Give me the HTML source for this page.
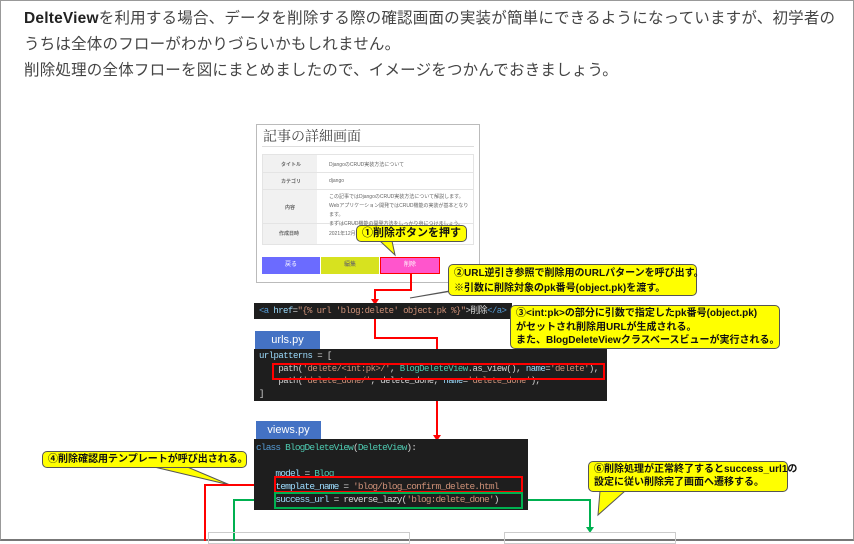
<!DOCTYPE html>
<html><head><meta charset="utf-8"><style>
*{margin:0;padding:0;box-sizing:border-box}
body{width:854px;height:541px;overflow:hidden;background:#fff;position:relative;font-family:"Liberation Sans","Noto Sans CJK JP",sans-serif}
.frame{position:absolute;left:0;top:0;width:854px;height:541px;border:1px solid #999;border-bottom:2px solid #777}
.p{position:absolute;left:24px;font-size:15.5px;color:#444;white-space:nowrap;letter-spacing:0.2px}
.a{position:absolute}
.call{position:absolute;background:#ffff00;border:1.5px solid #555;border-radius:5px;font-size:10px;font-weight:bold;color:#111;line-height:15px;padding:1px 5px;white-space:nowrap}
.code{position:absolute;background:#1e1e1e;font-family:"Liberation Mono","Noto Sans CJK JP",monospace;color:#d4d4d4;white-space:pre;overflow:hidden}
.tab{position:absolute;background:#4472c4;color:#fff;font-size:11px;text-align:center;line-height:18px}
.s{color:#ce9178}.c{color:#4ec9b0}.n{color:#9cdcfe}.k{color:#569cd6}
</style></head><body>
<div class="frame"></div>
<div class="p" style="top:6px"><b style="color:#222">DelteView</b>を利用する場合、データを削除する際の確認画面の実装が簡単にできるようになっていますが、初学者の</div>
<div class="p" style="top:32px">うちは全体のフローがわかりづらいかもしれません。</div>
<div class="p" style="top:58px">削除処理の全体フローを図にまとめましたので、イメージをつかんでおきましょう。</div>

<div class="a" style="left:256px;top:124px;width:224px;height:159px;border:1px solid #bbb;background:#fff"></div>
<div class="a" style="left:263px;top:126px;font-family:'Liberation Serif','Noto Serif CJK SC',serif;font-size:14px;color:#444">記事の詳細画面</div>
<div class="a" style="left:262px;top:146px;width:212px;height:1px;background:#ddd"></div>
<div class="a" style="left:262px;top:154px;width:212px;height:91px;border:1px solid #e4e4e4;font-size:5px;color:#666">
<div class="a" style="left:0;top:0;width:54px;height:89px;background:#f1f1f1"></div>
<div class="a" style="left:0;top:17px;width:210px;height:1px;background:#e4e4e4"></div>
<div class="a" style="left:0;top:34px;width:210px;height:1px;background:#e4e4e4"></div>
<div class="a" style="left:0;top:68px;width:210px;height:1px;background:#e4e4e4"></div>
<div class="a" style="left:18px;top:6px;font-weight:bold">タイトル</div><div class="a" style="left:66px;top:6px">DjangoのCRUD実装方法について</div>
<div class="a" style="left:18px;top:23px;font-weight:bold">カテゴリ</div><div class="a" style="left:66px;top:23px">django</div>
<div class="a" style="left:22px;top:49px;font-weight:bold">内容</div><div class="a" style="left:66px;top:38px;line-height:9px">この記事ではDjangoのCRUD実装方法について解説します。<br>Webアプリケーション開発ではCRUD機能の実装が基本となります。<br>まずはCRUD機能の開発方法をしっかり身につけましょう。</div>
<div class="a" style="left:16px;top:75px;font-weight:bold">作成日時</div><div class="a" style="left:66px;top:75px">2021年12月2</div>
</div>
<div class="a" style="left:262px;top:257px;width:58px;height:17px;background:#6b6bff;color:#fff;font-size:6px;text-align:center;line-height:17px">戻る</div>
<div class="a" style="left:321px;top:257px;width:58px;height:17px;background:#d7e21f;color:#666;font-size:6px;text-align:center;line-height:17px">編集</div>
<div class="a" style="left:380px;top:257px;width:60px;height:17px;background:#ff55cc;border:1.5px solid #f00;color:#fff;font-size:6px;text-align:center;line-height:14px">削除</div>

<svg class="a" style="left:0;top:0" width="854" height="541">
<polygon points="380,241 395,255 392,241" fill="#ff0" stroke="#555" stroke-width="1"/>
<polygon points="455,290 410,298 470,288" fill="#ff0" stroke="#555" stroke-width="1"/>
<polygon points="540,347 520,362 560,347" fill="#ff0" stroke="#555" stroke-width="1"/>
<polygon points="150,466 230,485 185,466" fill="#ff0" stroke="#555" stroke-width="1"/>
<polygon points="600,491 598,515 625,491" fill="#ff0" stroke="#555" stroke-width="1"/>
<polyline points="411,274 411,290 375,290 375,301" fill="none" stroke="#f00" stroke-width="2"/>
<polygon points="371,299 379,299 375,305" fill="#f00"/>
<polyline points="375,319 375,338 437,338 437,360" fill="none" stroke="#f00" stroke-width="2"/>
<polygon points="433,359 441,359 437,364" fill="#f00"/>
<polyline points="437,379 437,436" fill="none" stroke="#f00" stroke-width="2"/>
<polygon points="433,435 441,435 437,441" fill="#f00"/>
<polyline points="275,485 205,485 205,541" fill="none" stroke="#f00" stroke-width="2"/>
<polyline points="271,500 234,500 234,541" fill="none" stroke="#00b050" stroke-width="2"/>
<polygon points="270,496 270,504 276,500" fill="#00b050"/>
<polyline points="522,500 590,500 590,528" fill="none" stroke="#00b050" stroke-width="2"/>
<polygon points="586,527 594,527 590,533" fill="#00b050"/>
</svg>

<div class="call" style="left:356px;top:225px;font-size:11px;line-height:13px">①削除ボタンを押す</div>
<div class="call" style="left:448px;top:264px;width:249px;height:32px">②URL逆引き参照で削除用のURLパターンを呼び出す。<br>※引数に削除対象のpk番号(object.pk)を渡す。</div>

<div class="code" style="left:254px;top:303px;width:258px;height:16px;padding-left:5px;font-size:9px;letter-spacing:-0.6px;line-height:16px"><span class="k">&lt;a</span> <span class="n">href</span>=<span class="s">"{% url 'blog:delete' object.pk %}"</span>&gt;削除<span class="k">&lt;/a&gt;</span></div>

<div class="tab" style="left:255px;top:331px;width:65px">urls.py</div>
<div class="code" style="left:254px;top:349px;width:353px;height:52px;padding:1px 0 0 5px;line-height:12.5px;font-size:9px;letter-spacing:-0.55px"><span class="n">urlpatterns</span> = [
    path(<span class="s">'delete/&lt;int:pk&gt;/'</span>, <span class="c">BlogDeleteView</span>.as_view(), <span class="n">name</span>=<span class="s">'delete'</span>),
    path(<span class="s">'delete_done/'</span>, delete_done, <span class="n">name</span>=<span class="s">'delete_done'</span>),
]</div>
<div class="a" style="left:272px;top:363px;width:333px;height:17px;border:2px solid #f00"></div>
<div class="call" style="left:510px;top:305px;width:270px;height:44px;line-height:13.5px">③&lt;int:pk&gt;の部分に引数で指定したpk番号(object.pk)<br>がセットされ削除用URLが生成される。<br>また、BlogDeleteViewクラスベースビューが実行される。</div>

<div class="tab" style="left:256px;top:421px;width:65px">views.py</div>
<div class="code" style="left:254px;top:439px;width:274px;height:71px;padding:2px 0 0 2px;line-height:13px;font-size:9.5px;letter-spacing:-0.85px"><span class="k">class</span> <span class="c">BlogDeleteView</span>(<span class="c">DeleteView</span>):

    <span class="n">model</span> = <span class="c">Blog</span>
    <span class="n">template_name</span> = <span class="s">'blog/blog_confirm_delete.html</span>
    <span class="n">success_url</span> = reverse_lazy(<span class="s">'blog:delete_done'</span>)</div>
<div class="a" style="left:274px;top:476px;width:249px;height:17px;border:2px solid #f00"></div>
<div class="a" style="left:274px;top:492px;width:249px;height:17px;border:2px solid #00b050"></div>
<div class="call" style="left:42px;top:451px;width:205px;height:17px;line-height:13px">④削除確認用テンプレートが呼び出される。</div>
<div class="call" style="left:588px;top:461px;width:200px;height:31px;line-height:13px">⑥削除処理が正常終了するとsuccess_url1の<br>設定に従い削除完了画面へ遷移する。</div>

<div class="a" style="left:208px;top:532px;width:202px;height:12px;border:1px solid #ccc"></div>
<div class="a" style="left:504px;top:532px;width:172px;height:12px;border:1px solid #ccc"></div>
</body></html>
